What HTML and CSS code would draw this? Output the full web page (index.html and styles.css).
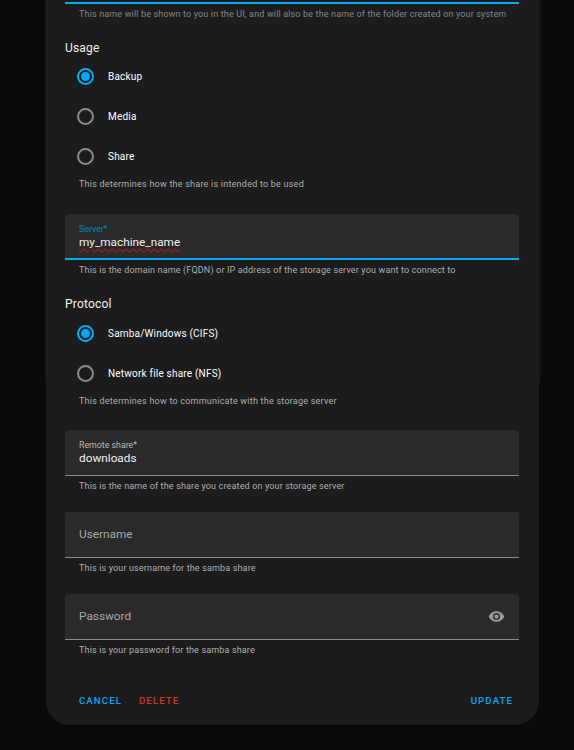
FILE: index.html
```html
<!DOCTYPE html>
<html lang="en">
<head>
<meta charset="utf-8">
<title>Edit network storage</title>
<link rel="stylesheet" href="styles.css">
</head>
<body>
<div class="ghost" aria-hidden="true"></div>
<main class="dialog">
  <div class="name-line"></div>
  <p class="helper helper-dim">This name will be shown to you in the UI, and will also be the name of the folder created on your system</p>

  <section class="group group-usage">
    <h3 class="group-title">Usage</h3>
    <div class="radio"><span class="dot on"></span><span class="radio-label">Backup</span></div>
    <div class="radio"><span class="dot"></span><span class="radio-label">Media</span></div>
    <div class="radio"><span class="dot"></span><span class="radio-label">Share</span></div>
    <p class="helper helper-group">This determines how the share is intended to be used</p>
  </section>

  <div class="field focused field-server">
    <span class="float-label">Server*</span>
    <span class="value"><span class="misspelled">my_machine_name</span></span>
  </div>
  <p class="helper">This is the domain name (FQDN) or IP address of the storage server you want to connect to</p>

  <section class="group group-protocol">
    <h3 class="group-title">Protocol</h3>
    <div class="radio"><span class="dot on"></span><span class="radio-label">Samba/Windows (CIFS)</span></div>
    <div class="radio"><span class="dot"></span><span class="radio-label">Network file share (NFS)</span></div>
    <p class="helper helper-group">This determines how to communicate with the storage server</p>
  </section>

  <div class="field field-remote">
    <span class="float-label">Remote share*</span>
    <span class="value">downloads</span>
  </div>
  <p class="helper">This is the name of the share you created on your storage server</p>

  <div class="field field-plain field-username">
    <span class="placeholder">Username</span>
  </div>
  <p class="helper">This is your username for the samba share</p>

  <div class="field field-plain field-password">
    <span class="placeholder">Password</span>
    <svg class="eye" viewBox="0 0 24 24" width="17" height="17" aria-hidden="true"><path d="M12 9a3 3 0 0 0-3 3 3 3 0 0 0 3 3 3 3 0 0 0 3-3 3 3 0 0 0-3-3m0 8a5 5 0 0 1-5-5 5 5 0 0 1 5-5 5 5 0 0 1 5 5 5 5 0 0 1-5 5m0-12.500C7 4.500 2.730 7.610 1 12c1.730 4.390 6 7.500 11 7.500s9.270-3.110 11-7.500c-1.730-4.390-6-7.500-11-7.500z"/></svg>
  </div>
  <p class="helper">This is your password for the samba share</p>

  <footer class="actions">
    <span class="btn btn-primary">Cancel</span>
    <span class="btn btn-danger">Delete</span>
    <span class="btn btn-primary btn-end">Update</span>
  </footer>
</main>
</body>
</html>
```

FILE: styles.css
```css
* { box-sizing: border-box; }
html, body { height: 100%; }
body {
  margin: 0;
  height: 750px;
  overflow: hidden;
  position: relative;
  background: #0a0a0a;
  font-family: Roboto, "Liberation Sans", sans-serif;
  color: #e1e1e1;
}
.ghost {
  position: absolute;
  left: 44.500px;
  top: -40px;
  width: 496px;
  height: 425px;
  border-radius: 0 0 5px 5px;
  background: #141414;
}
.dialog {
  position: relative;
  width: 493px;
  height: 725px;
  margin-left: 46px;
  padding: 2px 20px 0 19px;
  background: #1c1c1c;
  border-radius: 0 0 24px 24px;
  display: flex;
  flex-direction: column;
}
.name-line { height: 2px; background: #03a9f4; flex: none; }
.helper {
  margin: 3px 0 0;
  padding-left: 14px;
  height: 14px;
  flex: none;
  font-size: 9px;
  line-height: 14px;
  letter-spacing: 0.15px;
  color: #b0b0b0;
  white-space: nowrap;
}
.helper-dim { color: #868686; }
.helper-group { margin-top: 1px; letter-spacing: 0.23px; }
.group { display: flex; flex-direction: column; flex: none; }
.group-usage { margin-top: 18px; }
.group-protocol { margin-top: 18.500px; }
.group-title {
  margin: 0;
  font-size: 12px;
  line-height: 18px;
  font-weight: 400;
  letter-spacing: 0.2px;
  color: #f0f0f0;
}
.radio {
  height: 39.800px;
  display: flex;
  align-items: center;
  padding-left: 11.500px;
  gap: 14.500px;
}
.dot {
  width: 17px;
  height: 17px;
  border-radius: 50%;
  border: 2px solid #8a8a8a;
  flex: none;
  position: relative;
}
.dot.on { border-color: #03a9f4; }
.dot.on::after {
  content: "";
  position: absolute;
  inset: 2px;
  border-radius: 50%;
  background: #03a9f4;
}
.radio-label {
  font-size: 10px;
  letter-spacing: 0.2px;
  color: #ffffff;
}
.field {
  position: relative;
  height: 46px;
  flex: none;
  background: #2a2a2a;
  border-radius: 3px 3px 0 0;
  border-bottom: 1px solid #8c8c8c;
  padding: 9px 14px 0;
  display: flex;
  flex-direction: column;
}
.focused { border-bottom: 2px solid #03a9f4; }
.field-server { margin-top: 22.600px; }
.field-remote { margin-top: 21.500px; }
.field-username { margin-top: 19.400px; }
.field-password { margin-top: 19px; }
.field-plain { padding-top: 0; flex-direction: row; align-items: center; }
.float-label {
  font-size: 8.800px;
  line-height: 12px;
  color: #b8b8b8;
}
.focused .float-label { color: #0288c7; }
.value {
  font-size: 11.800px;
  line-height: 15px;
  color: #f0f0f0;
}
.misspelled {
  text-decoration: underline wavy #e01010 1px;
  text-underline-offset: 2px;
}
.placeholder {
  flex: 1;
  font-size: 11.800px;
  color: #a8a8a8;
}
.eye { fill: #9a9a9a; flex: none; }
.actions {
  margin-top: 34px;
  padding: 0 6px 0 14px;
  display: flex;
  align-items: center;
  gap: 17px;
}
.btn {
  font-size: 9.700px;
  line-height: 20px;
  font-weight: 500;
  letter-spacing: 1.050px;
  text-transform: uppercase;
}
.btn-primary { color: #03a9f4; }
.btn-danger { color: #c5392b; }
.btn-end { margin-left: auto; }
```
